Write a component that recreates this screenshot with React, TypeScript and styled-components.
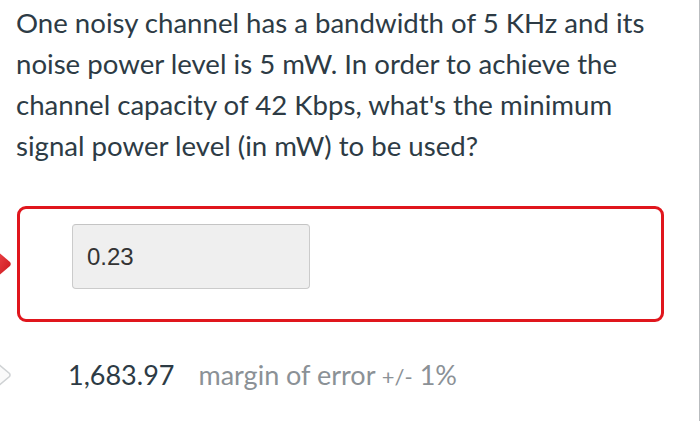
import styled, { createGlobalStyle } from 'styled-components'

const GlobalStyle = createGlobalStyle`
  html, body {
    margin: 0;
    padding: 0;
    background: #fff;
  }
  body {
    font-family: Lato, "Noto Sans", sans-serif;
  }
`

const Page = styled.div`
  box-sizing: border-box;
  width: 700px;
  height: 421px;
  border-right: 1px solid #b9bcbf;
  overflow: hidden;
`

const Question = styled.p`
  margin: 0;
  max-width: 660px;
  padding: 2px 0 0 16px;
  font-size: 27.6px;
  line-height: 41px;
  color: #2d3b45;
`

const AnswerRow = styled.div<{ $top: number }>`
  display: flex;
  align-items: center;
  margin-top: ${(p) => p.$top}px;
`

const ArrowSlot = styled.div`
  width: 17px;
  flex: none;
  display: flex;
  align-items: center;
`

const AnswerBox = styled.div`
  box-sizing: border-box;
  width: 647px;
  height: 116px;
  border: 3px solid #e0161d;
  border-radius: 9px;
  padding: 15px 0 0 52px;
`

const Field = styled.div`
  box-sizing: border-box;
  width: 238px;
  height: 65px;
  background: #efefef;
  border: 1px solid #cbcbcb;
  border-top-color: #c4c4c4;
  border-radius: 4px;
  padding-left: 14px;
  display: flex;
  align-items: center;
  font-family: "Liberation Sans", Arial, sans-serif;
  font-size: 24px;
  color: #333;
`

const Correct = styled.div`
  display: flex;
  align-items: baseline;
  padding-left: 51px;
  font-size: 27px;
  color: #2d3b45;
`

const Margin = styled.span`
  margin-left: 24px;
  color: #8b9196;
`

const Small = styled.span`
  font-size: 22px;
`

const RedArrow = () => (
  <svg width="12" height="30" viewBox="0 0 12 30">
    <defs>
      <linearGradient id="ra" x1="0" y1="0" x2="1" y2="1">
        <stop offset="0" stopColor="#f0474b" />
        <stop offset="1" stopColor="#c8141a" />
      </linearGradient>
    </defs>
    <path d="M-4 1 L10 13 Q11.5 15 10 17 L-4 29 Z" fill="url(#ra)" />
  </svg>
)

const GreyArrow = () => (
  <svg width="12" height="30" viewBox="0 0 12 30">
    <path
      d="M-4 2 L9.5 13.5 Q10.5 15 9.5 16.5 L-4 28"
      fill="#fafafa"
      stroke="#cfd2d4"
      strokeWidth="1.5"
    />
  </svg>
)

export default function App() {
  return (
    <>
      <GlobalStyle />
      <Page>
        <Question>
          One noisy channel has a bandwidth of 5 KHz and its noise power level
          is 5 mW. In order to achieve the channel capacity of 42 Kbps, what's
          the minimum signal power level (in mW) to be used?
        </Question>
        <AnswerRow $top={40}>
          <ArrowSlot>
            <RedArrow />
          </ArrowSlot>
          <AnswerBox>
            <Field>0.23</Field>
          </AnswerBox>
        </AnswerRow>
        <AnswerRow $top={36}>
          <ArrowSlot>
            <GreyArrow />
          </ArrowSlot>
          <Correct>
            1,683.97
            <Margin>
              margin of error <Small>+/-</Small> 1%
            </Margin>
          </Correct>
        </AnswerRow>
      </Page>
    </>
  )
}
